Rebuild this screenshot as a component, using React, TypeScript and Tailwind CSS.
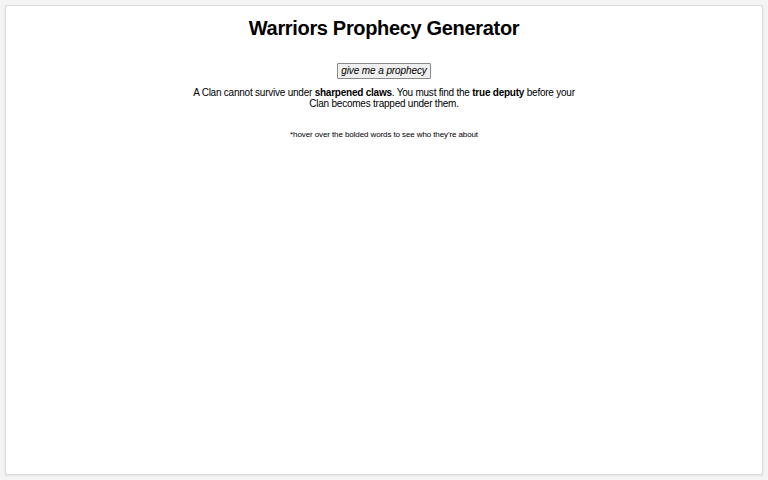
export default function App() {
  return (
    <div className="min-h-[480px] bg-[#f4f4f4] p-[5px] font-['Liberation_Sans',Arial,sans-serif] text-black">
      <div className="flex h-[470px] flex-col items-center border border-[#dcdcdc] bg-white shadow-[0_1px_2px_rgba(0,0,0,0.08)]">
        <h1 className="mt-[11px] text-[20px] font-bold leading-[22px] tracking-[-0.33px]">Warriors Prophecy Generator</h1>
        <button className="mt-[24px] rounded-[1px] border border-[#8a8a8a] bg-[#efefef] px-[3px] py-[1px] text-[10px] italic leading-[12px] tracking-[-0.1px]">
          give me a prophecy
        </button>
        <p className="mt-[8px] w-[400px] text-center text-[10px] leading-[11px] tracking-[-0.23px]">
          A Clan cannot survive under <b>sharpened claws</b>. You must find the <b>true deputy</b> before your Clan becomes trapped under them.
        </p>
        <p className="mt-[21px] text-[8px] leading-[10px] tracking-[-0.1px]">*hover over the bolded words to see who they're about</p>
      </div>
    </div>
  );
}
